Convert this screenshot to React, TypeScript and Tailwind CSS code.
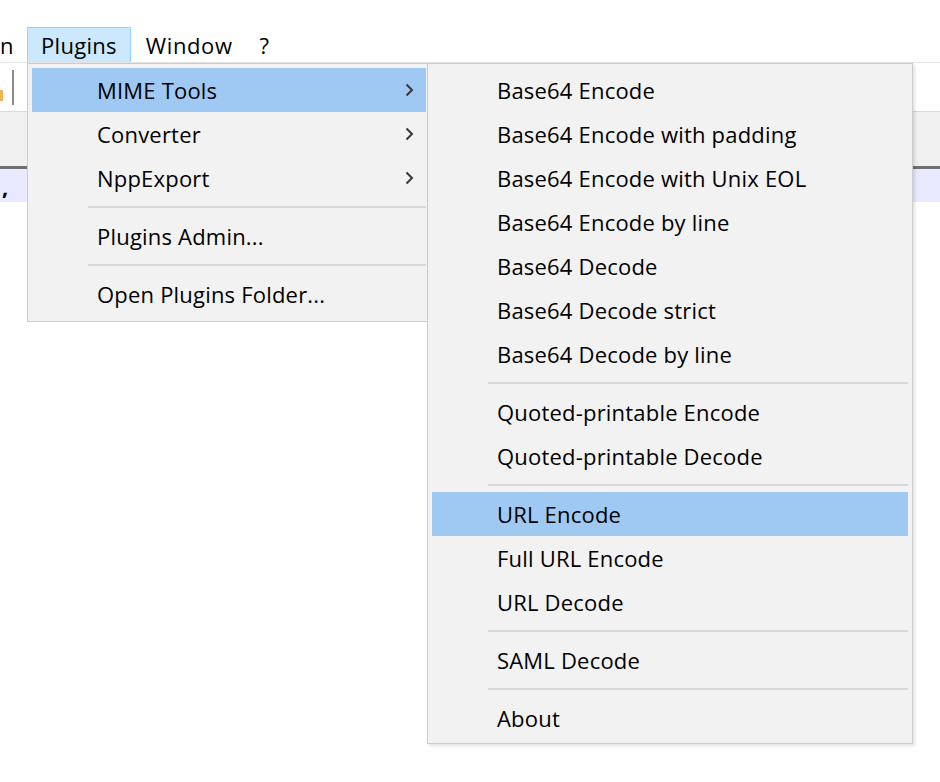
import React from "react";

type Entry = { label: string; sub?: boolean; active?: boolean } | "sep";

const PLUGINS: Entry[] = [
  { label: "MIME Tools", sub: true, active: true },
  { label: "Converter", sub: true },
  { label: "NppExport", sub: true },
  "sep",
  { label: "Plugins Admin..." },
  "sep",
  { label: "Open Plugins Folder..." },
];

const MIME: Entry[] = [
  { label: "Base64 Encode" },
  { label: "Base64 Encode with padding" },
  { label: "Base64 Encode with Unix EOL" },
  { label: "Base64 Encode by line" },
  { label: "Base64 Decode" },
  { label: "Base64 Decode strict" },
  { label: "Base64 Decode by line" },
  "sep",
  { label: "Quoted-printable Encode" },
  { label: "Quoted-printable Decode" },
  "sep",
  { label: "URL Encode", active: true },
  { label: "Full URL Encode" },
  { label: "URL Decode" },
  "sep",
  { label: "SAML Decode" },
  "sep",
  { label: "About" },
];

function Chevron() {
  return (
    <svg width="10" height="14" viewBox="0 0 10 14" className="absolute right-[12px] top-1/2 -translate-y-1/2">
      <polyline points="2.5,1.5 8,7 2.5,12.5" fill="none" stroke="#3a3a3a" strokeWidth="2" />
    </svg>
  );
}

function MenuList({ items }: { items: Entry[] }) {
  return (
    <div className="flex flex-col">
      {items.map((it, i) =>
        it === "sep" ? (
          <div key={i} className="h-[14px] flex items-center pl-[56px]">
            <div className="h-[2px] w-full bg-[#d7d7d7]" />
          </div>
        ) : (
          <div
            key={i}
            className={`relative h-[44px] flex items-center pl-[65px] ${it.active ? "bg-[#9fc8f2]" : ""}`}
          >
            <span className="text-[22px] text-black leading-none tracking-[0.2px]">{it.label}</span>
            {it.sub && <Chevron />}
          </div>
        )
      )}
    </div>
  );
}

export default function App() {
  return (
    <div className="relative w-[940px] h-[782px] overflow-hidden bg-white font-['Open_Sans',sans-serif]">
      {/* window chrome */}
      <div className="h-[27px]" />
      <div className="h-[36px] flex items-stretch border-b border-[#e3e3e3] text-[22px] text-black">
        <div className="w-[27px] flex items-center">
          <span className="leading-none">n</span>
        </div>
        <div className="flex items-center px-[13px] bg-[#cce8ff] border border-[#99d1ff] border-b-0 tracking-[0.3px]">
          <span className="leading-none">Plugins</span>
        </div>
        <div className="flex items-center px-[15px] tracking-[0.6px]">
          <span className="leading-none">Window</span>
        </div>
        <div className="flex items-center pl-[12px]">
          <span className="leading-none">?</span>
        </div>
      </div>
      {/* toolbar */}
      <div className="h-[49px] flex items-center border-b border-[#d9d9d9]">
        <div className="w-[3px] h-[11px] mt-[16px] bg-[#f0b35a]" />
        <div className="ml-[9px] w-[2px] h-[35px] bg-[#8a8a8a]" />
      </div>
      {/* tab strip */}
      <div className="h-[54px] bg-[#f0f0f0]" />
      <div className="h-[3px] bg-[#707070]" />
      {/* current line */}
      <div className="h-[33px] bg-[#e8e8ff] flex items-center pl-[2px]">
        <span className="text-[22px] font-bold leading-none text-black">,</span>
      </div>

      {/* Plugins dropdown */}
      <div className="absolute left-[27px] top-[63px] w-[404px] bg-[#f2f2f2] border border-[#cccccc] px-[4px] pt-[4px] pb-[5px]">
        <MenuList items={PLUGINS} />
      </div>

      {/* MIME Tools submenu */}
      <div className="absolute left-[427px] top-[63px] w-[486px] bg-[#f2f2f2] border border-[#cccccc] px-[4px] pt-[4px] pb-[3px] shadow-[2px_2px_3px_rgba(0,0,0,0.12)]">
        <MenuList items={MIME} />
      </div>
    </div>
  );
}
